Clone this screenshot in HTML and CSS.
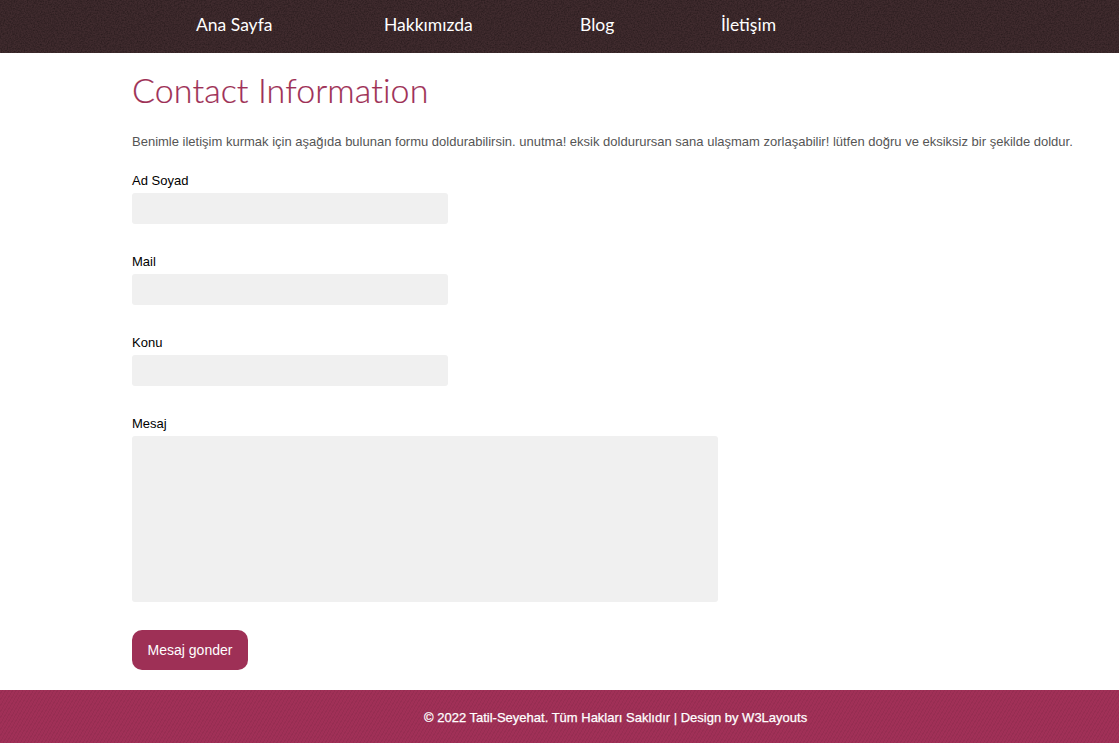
FILE: index.html
```html
<!DOCTYPE html>
<html lang="tr">
<head>
    <meta charset="UTF-8">
    <title>İletişim</title>
    <link rel="stylesheet" href="styles.css">
</head>
<body>
    <header class="header">
        <nav class="nav">
            <a class="nav-link" href="#">Ana Sayfa</a>
            <a class="nav-link" href="#">Hakkımızda</a>
            <a class="nav-link" href="#">Blog</a>
            <a class="nav-link" href="#">İletişim</a>
        </nav>
    </header>

    <main class="content">
        <h1 class="title">Contact Information</h1>
        <p class="intro">Benimle iletişim kurmak için aşağıda bulunan formu doldurabilirsin. unutma! eksik doldurursan sana ulaşmam zorlaşabilir! lütfen doğru ve eksiksiz bir şekilde doldur.</p>
        <form class="contact-form">
            <div class="field">
                <label class="field-label" for="name">Ad Soyad</label>
                <input class="field-input" type="text" id="name">
            </div>
            <div class="field">
                <label class="field-label" for="mail">Mail</label>
                <input class="field-input" type="text" id="mail">
            </div>
            <div class="field">
                <label class="field-label" for="subject">Konu</label>
                <input class="field-input" type="text" id="subject">
            </div>
            <div class="field">
                <label class="field-label" for="message">Mesaj</label>
                <textarea class="field-textarea" id="message"></textarea>
            </div>
            <button class="submit-button" type="button">Mesaj gonder</button>
        </form>
    </main>

    <footer class="footer">
        <p class="copyright">© 2022 Tatil-Seyehat. Tüm Hakları Saklıdır | Design by W3Layouts</p>
    </footer>
</body>
</html>
```

FILE: styles.css
```css
body {
    margin: 0;
    font-family: "Liberation Sans", Arial, sans-serif;
    background-color: #fff;
}
.header {
    height: 53px;
    background-color: #402b2e;
    background-image: url("data:image/svg+xml,%3Csvg xmlns='http://www.w3.org/2000/svg' width='300' height='53'%3E%3Cfilter id='n'%3E%3CfeTurbulence type='fractalNoise' baseFrequency='0.7' numOctaves='2' stitchTiles='stitch'/%3E%3CfeColorMatrix values='0 0 0 0 0 0 0 0 0 0 0 0 0 0 0 1.6 0 0 0 -0.55'/%3E%3C/filter%3E%3Crect width='300' height='53' filter='url(%23n)' opacity='0.4'/%3E%3C/svg%3E");
}
.nav {
    display: grid;
    grid-template-columns: 188px 196px 141px auto;
    padding-left: 196px;
}
.nav-link {
    font-family: "Lato", sans-serif;
    font-size: 17.5px;
    line-height: 50px;
    color: #fff;
    text-decoration: none;
}
.content {
    padding: 0 0 20px 132px;
}
.title {
    margin: 0;
    padding-top: 17px;
    font-family: "Lato", sans-serif;
    font-weight: 300;
    font-size: 34px;
    line-height: 40px;
    font-variant-ligatures: none;
    letter-spacing: 0.1px;
    -webkit-text-stroke: 0.2px #9e3056;
    color: #9e3056;
}
.intro {
    margin: 22px 0 0;
    font-size: 13px;
    line-height: 20px;
    color: #555;
}
.contact-form {
    margin-top: 19px;
}
.field {
    margin-bottom: 28px;
}
.field-label {
    display: block;
    margin-bottom: 2px;
    font-size: 13px;
    line-height: 20px;
    color: #000;
}
.field-input,
.field-textarea {
    display: block;
    box-sizing: border-box;
    border: none;
    border-radius: 3px;
    background-color: #f0f0f0;
}
.field-input {
    width: 316px;
    height: 31px;
}
.field-textarea {
    width: 586px;
    height: 166px;
    resize: none;
}
.submit-button {
    display: block;
    width: 116px;
    height: 40px;
    border: none;
    border-radius: 10px;
    background-color: #9e3056;
    color: #fff;
    font-family: inherit;
    font-size: 14px;
}
.footer {
    height: 53px;
    background-color: #a03057;
    background-image: repeating-linear-gradient(-60deg, rgba(0,0,0,0.06) 0 1px, transparent 1px 3px);
}
.copyright {
    margin: 0;
    padding-left: 424px;
    font-size: 13px;
    line-height: 56px;
    -webkit-text-stroke: 0.25px #fff;
    color: #fff;
}
```
